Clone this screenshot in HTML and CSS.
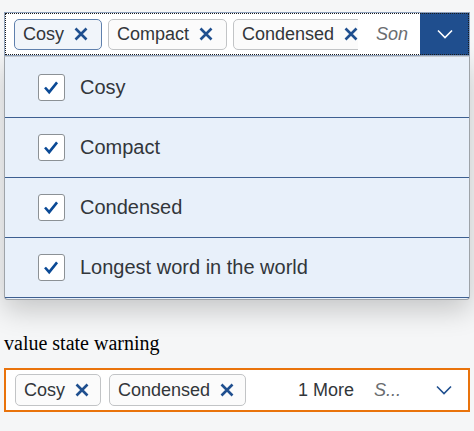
FILE: index.html
```html
<!DOCTYPE html>
<html>
<head>
<meta charset="utf-8">
<link rel="stylesheet" href="styles.css">
</head>
<body>
<div class="mcb mcb-focused">
  <div class="tokenizer">
    <span class="token token-active">Cosy<svg class="x" viewBox="0 0 14 14"><path d="M1.5 1.5 L12.5 12.5 M12.5 1.5 L1.5 12.5"/></svg></span>
    <span class="token">Compact<svg class="x" viewBox="0 0 14 14"><path d="M1.5 1.5 L12.5 12.5 M12.5 1.5 L1.5 12.5"/></svg></span>
    <span class="token">Condensed<svg class="x" viewBox="0 0 14 14"><path d="M1.5 1.5 L12.5 12.5 M12.5 1.5 L1.5 12.5"/></svg></span>
  </div>
  <div class="field"><span class="ph">Son</span></div>
  <div class="btn btn-pressed"><svg class="chev" viewBox="0 0 16 10"><path d="M1 1.5 L8 8.5 L15 1.5"/></svg></div>
</div>
<div class="popover">
  <div class="row"><span class="cb"><svg viewBox="0 0 27 27"><path d="M6.5 13.5 L11 18.5 L19.5 8"/></svg></span><span class="lbl">Cosy</span></div>
  <div class="row"><span class="cb"><svg viewBox="0 0 27 27"><path d="M6.5 13.5 L11 18.5 L19.5 8"/></svg></span><span class="lbl">Compact</span></div>
  <div class="row"><span class="cb"><svg viewBox="0 0 27 27"><path d="M6.5 13.5 L11 18.5 L19.5 8"/></svg></span><span class="lbl">Condensed</span></div>
  <div class="row"><span class="cb"><svg viewBox="0 0 27 27"><path d="M6.5 13.5 L11 18.5 L19.5 8"/></svg></span><span class="lbl">Longest word in the world</span></div>
</div>
<div class="caption">value state warning</div>
<div class="mcb mcb-warning">
  <div class="tokenizer">
    <span class="token">Cosy<svg class="x" viewBox="0 0 14 14"><path d="M1.5 1.5 L12.5 12.5 M12.5 1.5 L1.5 12.5"/></svg></span>
    <span class="token">Condensed<svg class="x" viewBox="0 0 14 14"><path d="M1.5 1.5 L12.5 12.5 M12.5 1.5 L1.5 12.5"/></svg></span>
    <span class="more">1 More</span>
  </div>
  <div class="field"><span class="ph">S...</span></div>
  <div class="btn"><svg class="chev chev-blue" viewBox="0 0 16 10"><path d="M1 1.5 L8 8.5 L15 1.5"/></svg></div>
</div>
</body>
</html>
```

FILE: styles.css
```css
html {
  background: #f5f6f7;
}
body {
  margin: 0;
  padding: 12px 4px 0 4px;
  width: 466px;
  font-family: "Liberation Sans", Arial, sans-serif;
  color: #32363a;
}
.mcb {
  position: relative;
  display: flex;
  box-sizing: border-box;
  height: 44px;
  background: #fff;
}
.mcb-focused {
  border: 1px solid #8fa2bd;
}
.mcb-focused::after {
  content: "";
  position: absolute;
  inset: 0;
  border: 1px dotted #1a1a1a;
  pointer-events: none;
}
.mcb-warning {
  border: 2px solid #e9730c;
}
.tokenizer {
  flex: 1;
  min-width: 0;
  display: flex;
  align-items: center;
  gap: 6px;
  padding-left: 9px;
  overflow: hidden;
  white-space: nowrap;
}
.mcb-warning .tokenizer {
  gap: 8px;
}
.token {
  flex: none;
  display: inline-flex;
  align-items: center;
  box-sizing: border-box;
  height: 31px;
  padding: 0 13px 0 8px;
  border: 1px solid #c2c4c6;
  border-radius: 5px;
  background: #fbfbfb;
  font-size: 18px;
  color: #32363a;
}
.mcb-warning .token {
  height: 32px;
  padding-right: 11px;
}
.token-active {
  border-color: #5f80ad;
  background: #f1f5fa;
}
.x {
  width: 14px;
  height: 14px;
  margin-left: 10px;
}
.x path {
  fill: none;
  stroke: #1f4f8f;
  stroke-width: 2.6;
}
.more {
  margin-left: auto;
  padding-right: 4px;
  font-size: 18px;
  color: #32363a;
}
.field {
  flex: none;
  width: 62px;
  box-sizing: border-box;
  padding-left: 18px;
  display: flex;
  align-items: center;
  overflow: hidden;
  white-space: nowrap;
}
.mcb-warning .field {
  padding-left: 16px;
}
.ph {
  font-size: 18px;
  font-style: italic;
  color: #6a6d70;
}
.btn {
  flex: none;
  width: 49px;
  display: flex;
  align-items: center;
  justify-content: center;
}
.mcb-warning .btn {
  width: 48px;
}
.btn-pressed {
  background: #1f4e8e;
}
.chev {
  width: 16px;
  height: 10px;
}
.chev path {
  fill: none;
  stroke: #fff;
  stroke-width: 1.6;
}
.chev-blue path {
  stroke: #1f4f8f;
}
.popover {
  box-sizing: border-box;
  border: 1px solid #9ea3a8;
  border-top-color: #c8ccd0;
  border-radius: 0 0 4px 4px;
  padding: 1px 0;
  background: #e8f0fa;
  box-shadow: 0 10px 28px rgba(0, 0, 0, 0.2);
}
.row {
  display: flex;
  align-items: center;
  height: 60px;
  box-sizing: border-box;
  border-bottom: 1px solid #3d5f90;
  padding-left: 33px;
}
.cb {
  flex: none;
  width: 27px;
  height: 27px;
  box-sizing: border-box;
  border: 1px solid #8c9195;
  border-radius: 3px;
  background: #fff;
  display: flex;
}
.cb svg {
  width: 25px;
  height: 25px;
}
.cb path {
  fill: none;
  stroke: #0b4a96;
  stroke-width: 2.8;
}
.lbl {
  margin-left: 15px;
  font-size: 20px;
  color: #32363a;
}
.caption {
  margin-top: 32px;
  font-family: "Liberation Serif", "Times New Roman", serif;
  font-size: 20px;
  line-height: 23px;
  color: #000;
}
.mcb-warning {
  margin-top: 13px;
}
```
